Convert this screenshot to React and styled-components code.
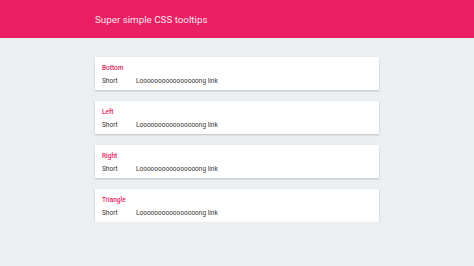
import styled, { createGlobalStyle } from 'styled-components';

const GlobalStyle = createGlobalStyle`
  html, body {
    margin: 0;
    padding: 0;
    background: #eceff1;
    font-family: Roboto, 'Liberation Sans', sans-serif;
  }
`;

const Header = styled.header`
  background: #e91e63;
  height: 38px;
  display: flex;
  align-items: center;
  padding-left: 95px;
`;

const Title = styled.h1`
  margin: 0;
  font-size: 9.8px;
  font-weight: 400;
  color: #fce4ec;
`;

const Main = styled.main`
  width: 284px;
  margin: 19px 0 0 95px;
  display: flex;
  flex-direction: column;
  gap: 11px;
`;

const Card = styled.section`
  background: #fff;
  height: 33px;
  box-sizing: border-box;
  padding: 7px 7px 0;
  box-shadow: 0 1px 2px rgba(0, 0, 0, 0.2);
`;

const Heading = styled.h2`
  margin: 0 0 3.5px;
  font-size: 6.5px;
  font-weight: 500;
  color: #e91e63;
  line-height: 9px;
`;

const Row = styled.div`
  display: flex;
  font-size: 6.5px;
  line-height: 9px;
  color: #333;
`;

const Tip = styled.span`
  width: 34px;
`;

const sections = ['Bottom', 'Left', 'Right', 'Triangle'];

export default function App() {
  return (
    <>
      <GlobalStyle />
      <Header>
        <Title>Super simple CSS tooltips</Title>
      </Header>
      <Main>
        {sections.map((s) => (
          <Card key={s}>
            <Heading>{s}</Heading>
            <Row>
              <Tip>Short</Tip>
              <span>Loooooooooooooooong link</span>
            </Row>
          </Card>
        ))}
      </Main>
    </>
  );
}
